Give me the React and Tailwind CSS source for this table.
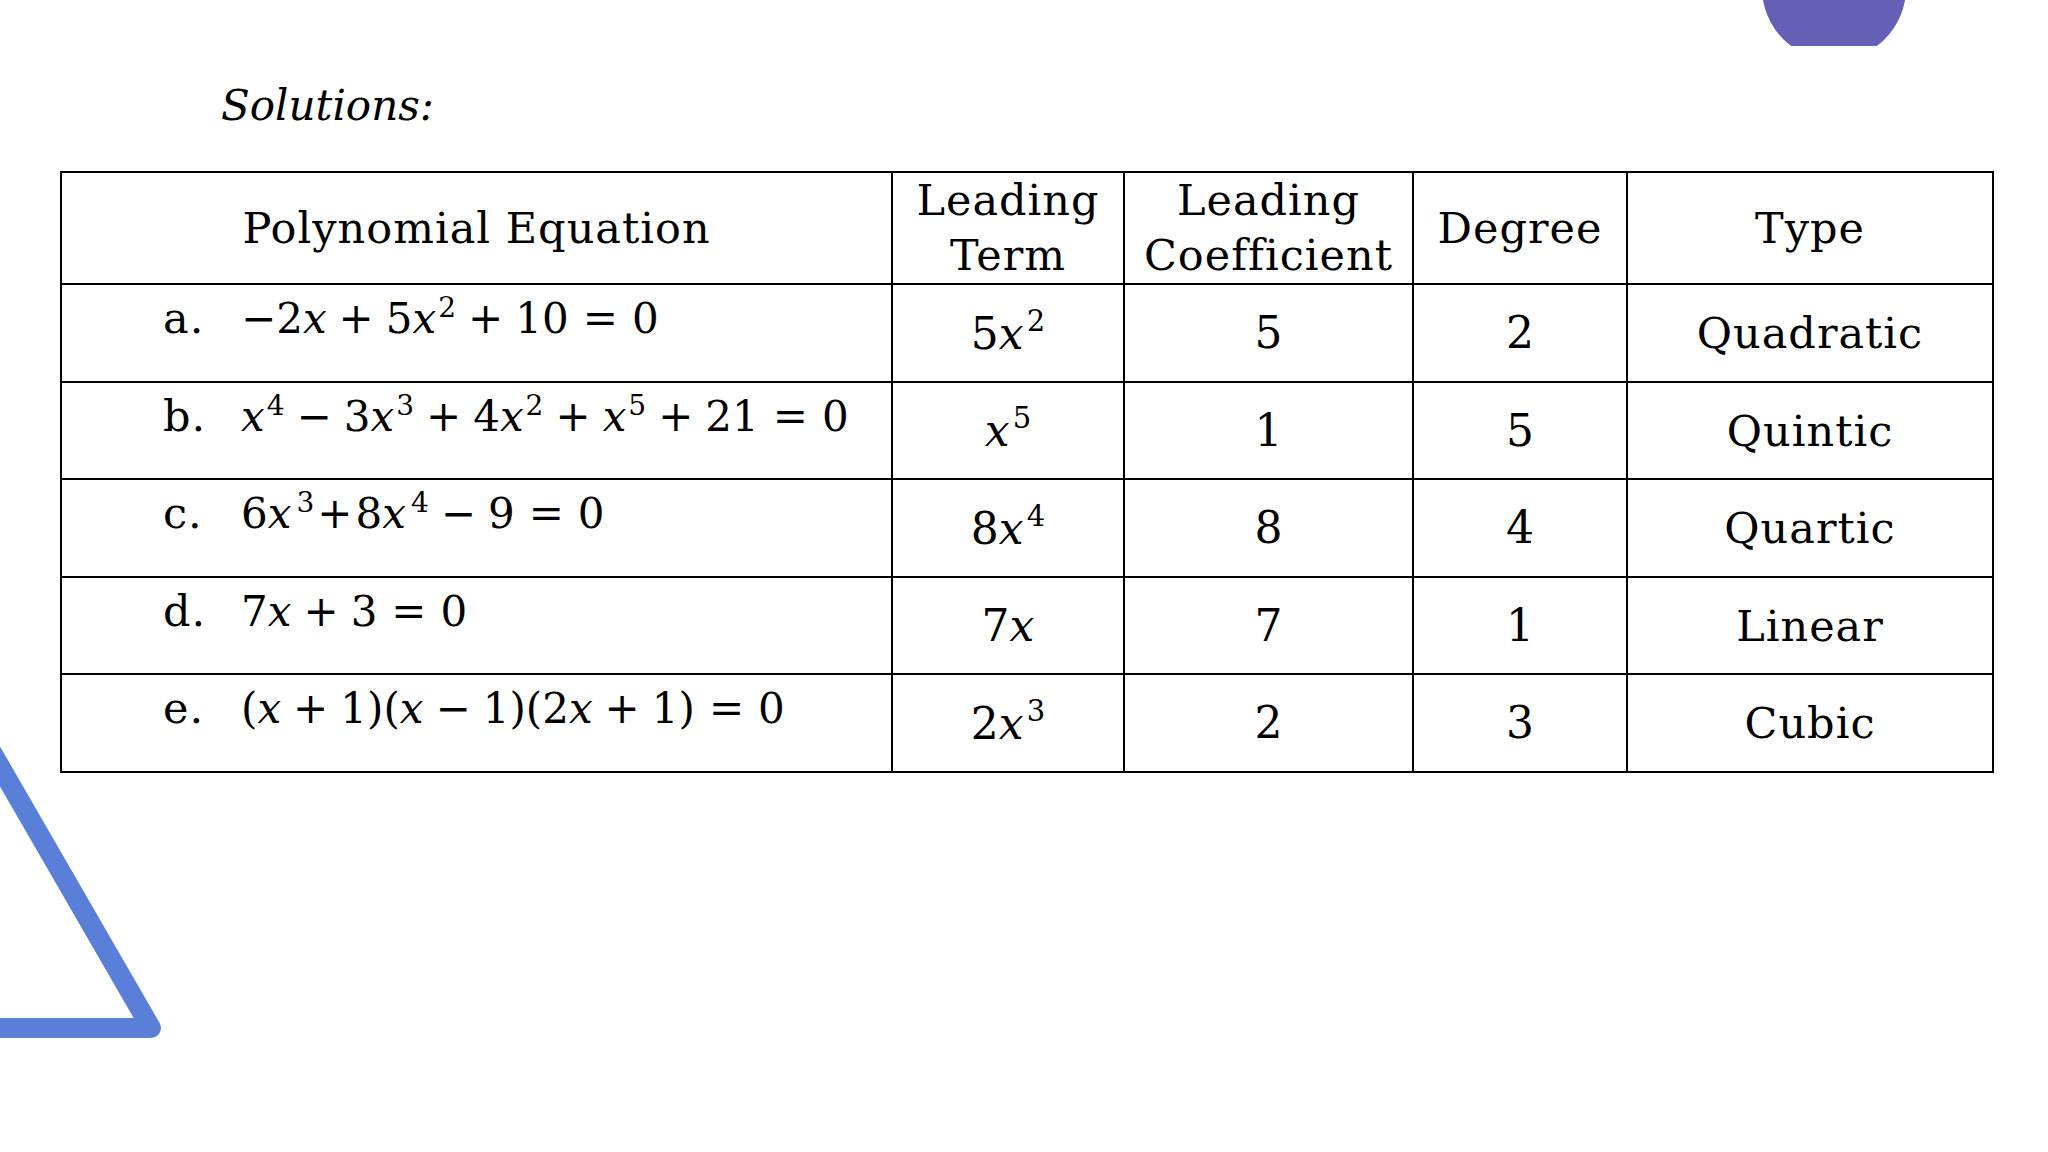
import React from "react";

const X = () => <span className="italic">x</span>;

const Op = ({ children, eq }) => (
  <span className={eq ? "mx-[14px]" : "mx-[12px]"}>{children}</span>
);

// superscript used inside the equations
const Sup = ({ children, className }) => (
  <span className={`text-[28px] leading-none align-[16px] ml-[2px] ${className || ""}`}>
    {children}
  </span>
);

// bigger superscript for the leading term column
const TSup = ({ children }) => (
  <span className="text-[29px] leading-none align-[18px] ml-[3px]">{children}</span>
);

const rows = [
  {
    label: "a.",
    eq: (
      <>
        −2<X />
        <Op>+</Op>5<X />
        <Sup>2</Sup>
        <Op>+</Op>10<Op eq>=</Op>0
      </>
    ),
    term: (
      <>
        5<X />
        <TSup>2</TSup>
      </>
    ),
    coef: "5",
    degree: "2",
    type: "Quadratic",
  },
  {
    label: "b.",
    eq: (
      <>
        <X />
        <Sup>4</Sup>
        <Op>−</Op>3<X />
        <Sup>3</Sup>
        <Op>+</Op>4<X />
        <Sup>2</Sup>
        <Op>+</Op>
        <X />
        <Sup>5</Sup>
        <Op>+</Op>21<Op eq>=</Op>0
      </>
    ),
    term: (
      <>
        <X />
        <TSup>5</TSup>
      </>
    ),
    coef: "1",
    degree: "5",
    type: "Quintic",
  },
  {
    label: "c.",
    eq: (
      <>
        6<X />
        <Sup className="ml-[5px]">3</Sup>
        <span className="mx-[3px]">+</span>8<X />
        <Sup className="ml-[5px]">4</Sup>
        <Op>−</Op>9<Op eq>=</Op>0
      </>
    ),
    term: (
      <>
        8<X />
        <TSup>4</TSup>
      </>
    ),
    coef: "8",
    degree: "4",
    type: "Quartic",
  },
  {
    label: "d.",
    eq: (
      <>
        7<X />
        <Op>+</Op>3<Op eq>=</Op>0
      </>
    ),
    term: (
      <>
        7<X />
      </>
    ),
    coef: "7",
    degree: "1",
    type: "Linear",
  },
  {
    label: "e.",
    eq: (
      <>
        (<X />
        <Op>+</Op>1)(<X />
        <Op>−</Op>1)(2<X />
        <Op>+</Op>1)<Op eq>=</Op>0
      </>
    ),
    term: (
      <>
        2<X />
        <TSup>3</TSup>
      </>
    ),
    coef: "2",
    degree: "3",
    type: "Cubic",
  },
];

const cell = "border-r-2 border-b-2 border-black";
const center = "flex items-center justify-center text-center";
const word = "text-[43px] tracking-[1px] font-['DejaVu_Serif',serif]";
const math = "text-[42px] leading-[50px] font-['DejaVu_Serif',serif]";
const num = "text-[44px] leading-[52px] font-['DejaVu_Serif',serif]";

const App = () => {
  return (
    <div className="relative w-[2048px] h-[1152px] overflow-hidden bg-white text-black">
      {/* purple circle, cut at the top and bottom */}
      <div className="absolute top-0 left-[1762px] w-[144px] h-[46px] overflow-hidden">
        <div className="-mt-[84px] w-[144px] h-[144px] rounded-full bg-[#655fb5]" />
      </div>

      {/* blue triangle outline */}
      <svg
        className="absolute left-0 top-[700px]"
        width="220"
        height="360"
        viewBox="0 0 220 360"
      >
        <polygon
          points="151,328 -149,-191.6 -449,328"
          fill="none"
          stroke="#5a7fd8"
          strokeWidth="20"
          strokeLinejoin="round"
        />
      </svg>

      <p className="pl-[221px] pt-[85px] italic text-[42px] leading-[42px] font-['DejaVu_Serif',serif]">
        Solutions:
      </p>

      <div className="relative ml-[60px] mt-[44px] grid w-fit grid-cols-[831px_232px_289px_214px_366px] grid-rows-[112px_98px_97px_98px_97px_98px] border-t-2 border-l-2 border-black">
        <div className={`${cell} ${center} ${word} leading-[55px]`}>
          Polynomial Equation
        </div>
        <div className={`${cell} ${center} ${word} leading-[55px]`}>
          Leading
          <br />
          Term
        </div>
        <div className={`${cell} ${center} ${word} leading-[55px]`}>
          Leading
          <br />
          Coefficient
        </div>
        <div className={`${cell} ${center} ${word} leading-[55px]`}>Degree</div>
        <div className={`${cell} ${center} ${word} leading-[55px]`}>Type</div>

        {rows.map((r) => (
          <React.Fragment key={r.label}>
            <div className={`${cell} flex items-start pl-[101px] pt-[8px]`}>
              <div className="flex items-baseline">
                <span className={`w-[78px] ${word} leading-[50px]`}>{r.label}</span>
                <span className={`${math} whitespace-nowrap`}>{r.eq}</span>
              </div>
            </div>
            <div className={`${cell} ${center}`}>
              <span className={`${num} whitespace-nowrap`}>{r.term}</span>
            </div>
            <div className={`${cell} ${center} ${num}`}>{r.coef}</div>
            <div className={`${cell} ${center} ${num}`}>{r.degree}</div>
            <div className={`${cell} ${center} ${word} leading-[50px]`}>{r.type}</div>
          </React.Fragment>
        ))}
      </div>
    </div>
  );
};

export default App;
